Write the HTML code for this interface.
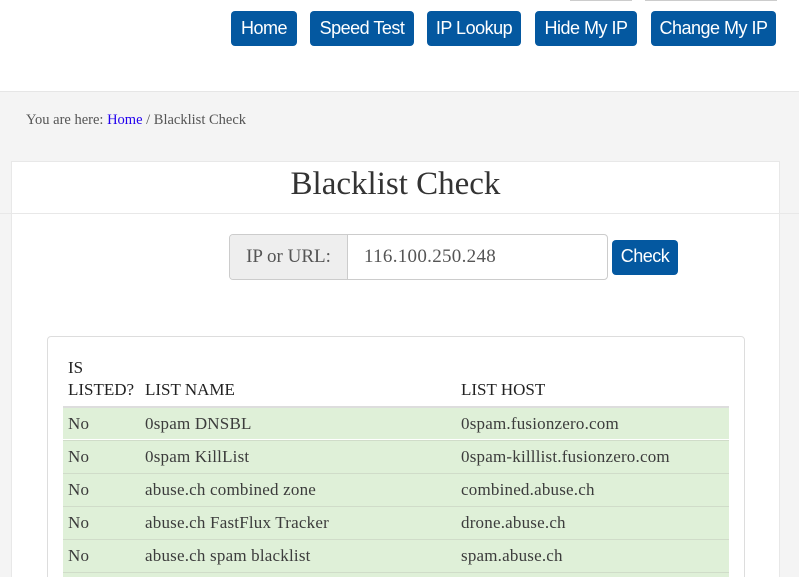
<!DOCTYPE html>
<html style="width:799px;height:577px;overflow:hidden"><head><style>
*{box-sizing:border-box;margin:0;padding:0}
body{width:799px;height:577px;overflow:hidden;background:#f4f4f4;font-family:"Liberation Serif",serif;color:#333;position:relative}
.hdr{position:absolute;left:0;top:0;width:799px;height:92px;background:#fff;border-bottom:1px solid #e6e6e6}
.tl{position:absolute;top:0;height:1px;background:#ccc}
.nb{position:absolute;top:11px;height:35px;background:#0458a0;color:#fff;border-radius:4px;font-family:"Liberation Sans",sans-serif;font-size:18px;line-height:34px;text-align:center;letter-spacing:-0.5px}
.bc{position:absolute;left:26px;top:112px;font-size:14.5px;color:#555}
.bc a{color:#2200ee;text-decoration:none}
.card{position:absolute;left:11px;top:161px;width:769px;height:420px;background:#fff;border:1px solid #e8e8e8}
.hl{position:absolute;left:0;top:213px;width:799px;height:1px;background:#e8e8e8}
h1{position:absolute;left:11px;width:769px;top:166px;text-align:center;font-weight:normal;font-size:33px;color:#333}
.ig{position:absolute;left:229px;top:234px;width:379px;height:46px;border:1px solid #ccc;border-radius:4px;overflow:hidden;font-size:19px}
.ig .l{position:absolute;left:0;top:0;width:118px;height:44px;background:#eee;border-right:1px solid #ccc;line-height:44px;text-align:center;color:#555}
.ig .v{position:absolute;left:134px;top:0;line-height:44px;color:#555;letter-spacing:0.3px}
.ck{position:absolute;left:612px;top:240px;width:66px;height:35px;background:#0458a0;border-radius:4px;color:#fff;font-family:"Liberation Sans",sans-serif;font-size:18px;line-height:33px;text-align:center;letter-spacing:-0.5px}
.tb{position:absolute;left:47px;top:336px;width:698px;height:260px;border:1px solid #ddd;border-radius:4px;background:#fff}
.th{position:absolute;font-size:17px;color:#222;line-height:22px}
.row{position:absolute;left:63px;width:666px;height:33px;background:#dff0d8;border-top:1px solid #d0dcc9;font-size:17px;color:#3c3c3c;line-height:32px;letter-spacing:0.2px}
.row span{position:absolute}
</style></head><body>
<div class="hdr"></div>
<div class="tl" style="left:570px;width:62px"></div>
<div class="tl" style="left:645px;width:132px"></div>
<div class="nb" style="left:231px;width:66px">Home</div>
<div class="nb" style="left:310px;width:104px">Speed Test</div>
<div class="nb" style="left:427px;width:94px">IP Lookup</div>
<div class="nb" style="left:535px;width:102px">Hide My IP</div>
<div class="nb" style="left:651px;width:125px">Change My IP</div>
<div class="bc">You are here: <a>Home</a> / Blacklist Check</div>
<div class="card"></div>
<div class="hl"></div>
<h1>Blacklist Check</h1>
<div class="ig"><div class="l">IP or URL:</div><div class="v">116.100.250.248</div></div>
<div class="ck">Check</div>
<div class="tb"></div>
<div class="th" style="left:68px;top:357px">IS<br>LISTED?</div>
<div class="th" style="left:145px;top:379px">LIST NAME</div>
<div class="th" style="left:461px;top:379px">LIST HOST</div>
<div class="row" style="top:406px;border-top:2px solid #ddd"><span style="left:5px">No</span><span style="left:82px">0spam DNSBL</span><span style="left:398px">0spam.fusionzero.com</span></div>
<div class="row" style="top:440px"><span style="left:5px">No</span><span style="left:82px">0spam KillList</span><span style="left:398px">0spam-killlist.fusionzero.com</span></div>
<div class="row" style="top:473px"><span style="left:5px">No</span><span style="left:82px">abuse.ch combined zone</span><span style="left:398px">combined.abuse.ch</span></div>
<div class="row" style="top:506px"><span style="left:5px">No</span><span style="left:82px">abuse.ch FastFlux Tracker</span><span style="left:398px">drone.abuse.ch</span></div>
<div class="row" style="top:539px"><span style="left:5px">No</span><span style="left:82px">abuse.ch spam blacklist</span><span style="left:398px">spam.abuse.ch</span></div>
<div class="row" style="top:572px"></div>
</body></html>
